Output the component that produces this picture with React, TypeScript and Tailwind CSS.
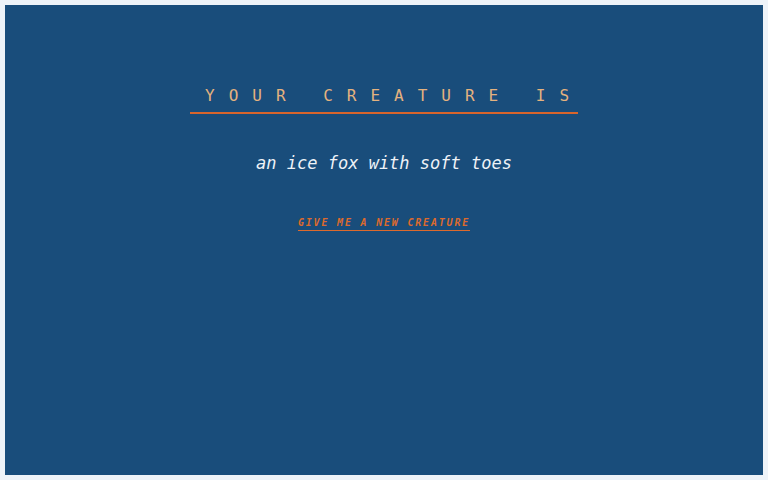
const mono = "font-['DejaVu_Sans_Mono','Liberation_Mono',monospace]";

export default function App() {
  return (
    <div className="h-[480px] w-full bg-[#eef3f8] p-[5px]">
      <div className={`flex h-full w-full flex-col items-center bg-[#194d7b] ${mono}`}>
        <div className="mt-[83px] w-[388px] whitespace-nowrap border-b-2 border-[#d8652c] pb-2 pl-[15px] text-[16px] uppercase leading-none tracking-[14px] text-[#e4b27f]">
          Your Creature Is
        </div>
        <p className="mt-[41px] text-[17px] italic leading-none text-[#eef2f7]">
          an ice fox with soft toes
        </p>
        <a
          href="#"
          className="mt-[46px] text-[10px] font-bold uppercase italic leading-none tracking-[0.18em] text-[#dd6a2d] underline underline-offset-[4px]"
        >
          Give me a new creature
        </a>
      </div>
    </div>
  );
}
